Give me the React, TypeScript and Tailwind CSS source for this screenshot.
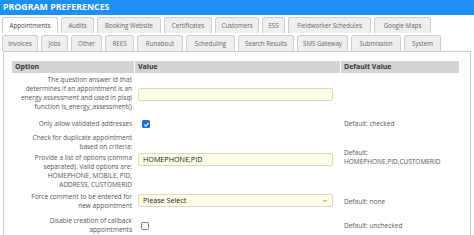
import { ChevronDown } from 'lucide-react';

const row1 = [
  { label: 'Appointments', w: 'w-[56px]', active: true },
  { label: 'Audits', w: 'w-[33px]' },
  { label: 'Booking Website', w: 'w-[64px]' },
  { label: 'Certificates', w: 'w-[48px]' },
  { label: 'Customers', w: 'w-[44px]' },
  { label: 'ESS', w: 'w-[23px]' },
  { label: 'Fieldworker Schedules', w: 'w-[83px]' },
  { label: 'Google Maps', w: 'w-[57px]' },
];

const row2 = [
  { label: 'Invoices', w: 'w-[36px]' },
  { label: 'Jobs', w: 'w-[27px]' },
  { label: 'Other', w: 'w-[31px]' },
  { label: 'REES', w: 'w-[29px]' },
  { label: 'Runabout', w: 'w-[46px]' },
  { label: 'Scheduling', w: 'w-[49px]' },
  { label: 'Search Results', w: 'w-[56px]' },
  { label: 'SMS Gateway', w: 'w-[51px]' },
  { label: 'Submission', w: 'w-[50px]' },
  { label: 'System', w: 'w-[37px]' },
];

type Tab = { label: string; w: string; active?: boolean };

function TabRow({ tabs }: { tabs: Tab[] }) {
  return (
    <div className="flex gap-[3px] pl-[2px]">
      {tabs.map((t) => (
        <div
          key={t.label}
          className={`${t.w} h-[16px] flex items-center justify-center whitespace-nowrap rounded-t-[3px] border border-b-0 border-[#cccccc] text-[6.2px] ${
            t.active ? 'bg-white text-[#444]' : 'bg-[#efefef] text-[#666]'
          }`}
        >
          {t.label}
        </div>
      ))}
    </div>
  );
}

function Checkbox({ checked }: { checked?: boolean }) {
  if (checked) {
    return (
      <span className="flex h-[8px] w-[8px] items-center justify-center rounded-[1.5px] bg-[#1a6fe0]">
        <svg viewBox="0 0 10 10" className="h-[7px] w-[7px]">
          <path d="M2 5.2 L4.1 7.3 L8 2.8" fill="none" stroke="white" strokeWidth="1.7" />
        </svg>
      </span>
    );
  }
  return <span className="block h-[8px] w-[8px] rounded-[1.5px] border border-[#777] bg-white" />;
}

function TextInput({ value }: { value?: string }) {
  return (
    <div className="flex h-[13px] w-[195px] items-center rounded-[2px] border border-[#d9d9c6] bg-[#fffee6] pl-[4px] text-[7.2px] text-[#222]">
      {value}
    </div>
  );
}

export default function App() {
  return (
    <div className="h-[235px] w-[474px] overflow-hidden bg-white font-['Open_Sans',sans-serif] text-[#555]">
      <div className="flex h-[15px] items-center bg-[#1e8ff5] pl-[3px] text-[8.8px] font-bold text-white">
        PROGRAM PREFERENCES
      </div>

      <div className="pt-[2px]">
        <TabRow tabs={row1} />
        <div className="h-[2px]" />
        <TabRow tabs={row2} />
      </div>

      <div className="mx-[3px] h-[200px] border border-[#cccccc] pl-[8px] pt-[9px]">
        {/* header */}
        <div className="grid grid-cols-[122px_205px_118px] gap-x-[1px] text-[7px] font-bold text-[#333]">
          <div className="flex h-[12px] items-center bg-[#d4d4d4] pl-[3px]">Option</div>
          <div className="flex h-[12px] items-center bg-[#d4d4d4] pl-[3px]">Value</div>
          <div className="flex h-[12px] items-center bg-[#d4d4d4] pl-[3px]">Default Value</div>
        </div>

        <div className="grid grid-cols-[122px_205px_118px] gap-x-[1px] text-[6.5px] leading-[8.8px]">
          {/* row 1 */}
          <div className="flex h-[42px] items-center justify-end pr-[2px] text-right">
            The question answer id that
            <br />
            determines if an appointment is an
            <br />
            energy assessment and used in plsql
            <br />
            function is_energy_assessment()
          </div>
          <div className="flex h-[42px] items-center pl-[3px]">
            <TextInput />
          </div>
          <div />

          {/* row 2 */}
          <div className="flex h-[18px] items-center justify-end pr-[2px] text-right">
            Only allow validated addresses
          </div>
          <div className="flex h-[18px] items-center pl-[7px]">
            <Checkbox checked />
          </div>
          <div className="flex h-[18px] items-center pl-[3px]">Default: checked</div>

          {/* row 3 */}
          <div className="flex h-[58px] flex-col items-end justify-center pr-[2px] text-right">
            <div>
              Check for duplicate appointment
              <br />
              based on criteria:
            </div>
            <div className="mt-[2.4px]">
              Provide a list of options (comma
              <br />
              separated). Valid options are:
              <br />
              HOMEPHONE, MOBILE, PID,
              <br />
              ADDRESS, CUSTOMERID
            </div>
          </div>
          <div className="flex h-[58px] items-center pb-[5px] pl-[3px]">
            <TextInput value="HOMEPHONE,PID" />
          </div>
          <div className="flex h-[58px] items-center pb-[8px] pl-[3px]">
            Default:
            <br />
            HOMEPHONE,PID,CUSTOMERID
          </div>

          {/* row 4 */}
          <div className="flex h-[22px] items-center justify-end pr-[2px] text-right">
            Force comment to be entered for
            <br />
            new appointment
          </div>
          <div className="flex h-[22px] items-center pb-[3px] pl-[3px]">
            <div className="flex h-[13px] w-[195px] items-center justify-between rounded-[2px] border border-[#d9d9c6] bg-[#fffee6] pl-[4px] pr-[4px] text-[7.2px] text-[#222]">
              Please Select
              <ChevronDown size={6} strokeWidth={3} className="text-[#666]" />
            </div>
          </div>
          <div className="flex h-[22px] items-center pl-[3px]">Default: none</div>

          {/* row 5 */}
          <div className="flex h-[26px] items-center justify-end pr-[2px] text-right">
            Disable creation of callback
            <br />
            appointments
          </div>
          <div className="flex h-[26px] items-center pl-[6px]">
            <Checkbox />
          </div>
          <div className="flex h-[26px] items-center pl-[3px]">Default: unchecked</div>
        </div>
      </div>
    </div>
  );
}
